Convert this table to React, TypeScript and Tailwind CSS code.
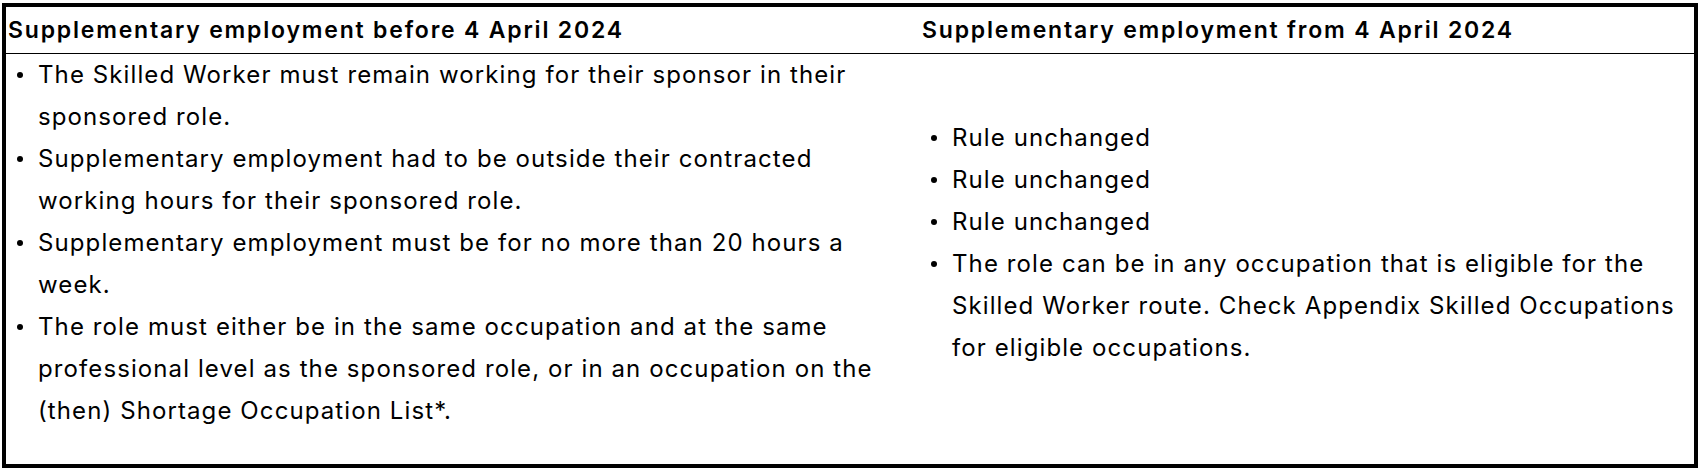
const before = [
  "The Skilled Worker must remain working for their sponsor in their sponsored role.",
  "Supplementary employment had to be outside their contracted working hours for their sponsored role.",
  "Supplementary employment must be for no more than 20 hours a week.",
  "The role must either be in the same occupation and at the same professional level as the sponsored role, or in an occupation on the (then) Shortage Occupation List*.",
];

const after = [
  "Rule unchanged",
  "Rule unchanged",
  "Rule unchanged",
  "The role can be in any occupation that is eligible for the Skilled Worker route. Check Appendix Skilled Occupations for eligible occupations.",
];

function Bullets({ items }: { items: string[] }) {
  return (
    <ul className="flex flex-col">
      {items.map((item, i) => (
        <li key={i} className="flex">
          <span className="flex h-[42px] w-[32px] shrink-0 items-center pl-[11px]">
            <span className="h-[6px] w-[6px] rounded-full bg-black" />
          </span>
          <span>{item}</span>
        </li>
      ))}
    </ul>
  );
}

export default function App() {
  return (
    <div className="h-[469px] w-[1699px] bg-white pl-[2px] pt-[3px] font-['Inter',sans-serif] text-black">
      <div className="h-[465px] w-[1696px] border-4 border-black">
        <div className="grid grid-cols-[908px_1fr] border-b border-black">
          <div className="flex h-[46px] items-center pl-[2px] text-[23px] font-semibold tracking-[1.8px]">
            Supplementary employment before 4 April 2024
          </div>
          <div className="flex h-[46px] items-center pl-[8px] text-[23px] font-semibold tracking-[1.8px]">
            Supplementary employment from 4 April 2024
          </div>
        </div>
        <div className="grid grid-cols-[908px_1fr] items-center text-[24px] leading-[42px] tracking-[1.1px]">
          <div className="pb-[33px] pr-[24px]">
            <Bullets items={before} />
          </div>
          <div className="pb-[33px] pl-[6px] pr-[4px]">
            <Bullets items={after} />
          </div>
        </div>
      </div>
    </div>
  );
}
